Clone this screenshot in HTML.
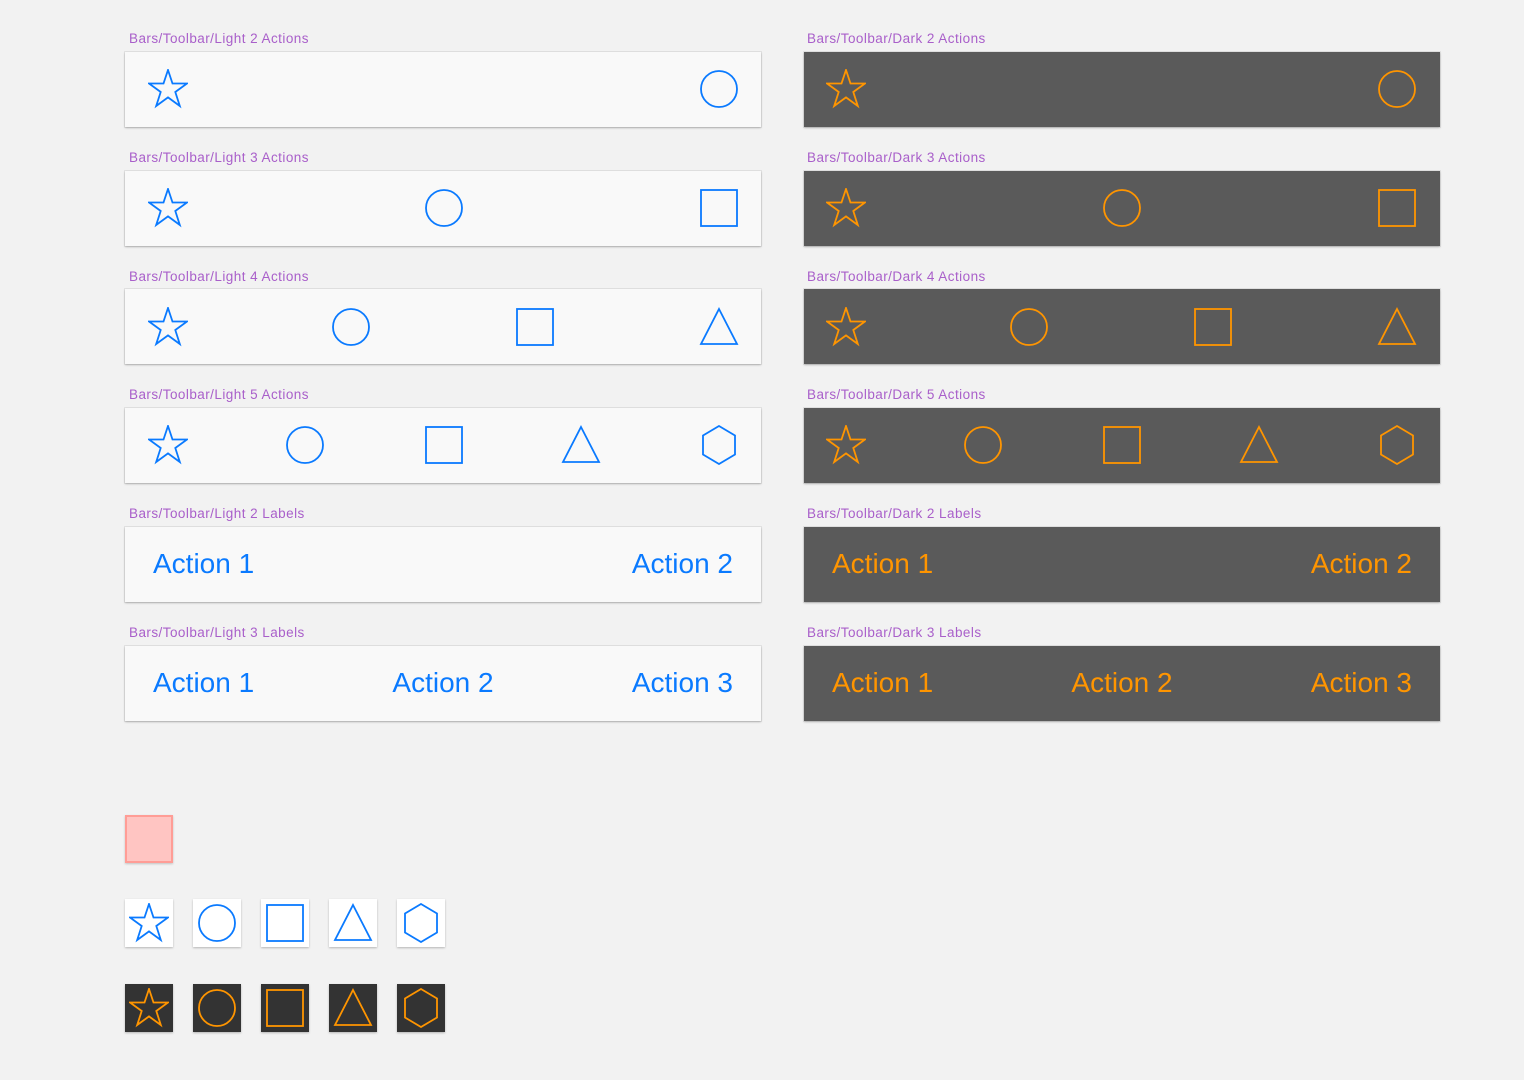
<!DOCTYPE html>
<html><head><meta charset="utf-8"><style>
body{margin:0;width:1524px;height:1080px;background:#f2f2f2;position:relative;overflow:hidden;font-family:"Liberation Sans",sans-serif}
.lb{position:absolute;font-size:13.5px;letter-spacing:0.45px;color:#a95fca;line-height:16px}
.bar{position:absolute;width:636px;height:75px;box-shadow:0 1px 2px rgba(0,0,0,.25),0 0 0 1px rgba(0,0,0,.06)}
.L{background:#f9f9f9}.D{background:#5a5a5a}
.i{position:absolute;width:40px;height:40px;overflow:visible}
.L .i,.tl .i{stroke:#0a7aff}.D .i,.td .i{stroke:#ff9500}
.i *{fill:none;stroke-width:1.8}
.t{position:absolute;top:19px;font-size:28px;line-height:36px}
.L .t{color:#0a7aff}.D .t{color:#ff9500}
.tile{position:absolute;width:48px;height:48px;box-shadow:0 1px 2px rgba(0,0,0,.25)}
.tl{background:#fff}.td{background:#333}
.tile .i{left:4px;top:4px}
</style></head><body>
<svg width="0" height="0" style="position:absolute"><defs>
<symbol id="s" viewBox="0 0 40 40"><polygon points="20,1 24.5,14.5 39,14.5 27.3,23 31.8,37 20,28.4 8.2,37 12.7,23 1,14.5 15.5,14.5"/></symbol>
<symbol id="c" viewBox="0 0 40 40"><circle cx="20" cy="20" r="18"/></symbol>
<symbol id="q" viewBox="0 0 40 40"><rect x="2" y="2" width="36" height="36"/></symbol>
<symbol id="t" viewBox="0 0 40 40"><polygon points="20,2 38,37 2,37"/></symbol>
<symbol id="h" viewBox="0 0 40 40"><polygon points="20,1 36,10.5 36,29.5 20,39 4,29.5 4,10.5"/></symbol>
</defs></svg>

<div class="lb" style="left:129px;top:31px">Bars/Toolbar/Light 2 Actions</div>
<div class="bar L" style="left:125px;top:52px">
<svg class="i" style="left:23px;top:17px"><use href="#s"/></svg>
<svg class="i" style="left:574px;top:17px"><use href="#c"/></svg></div>
<div class="lb" style="left:807px;top:31px">Bars/Toolbar/Dark 2 Actions</div>
<div class="bar D" style="left:804px;top:52px">
<svg class="i" style="left:22px;top:17px"><use href="#s"/></svg>
<svg class="i" style="left:573px;top:17px"><use href="#c"/></svg></div>

<div class="lb" style="left:129px;top:150px">Bars/Toolbar/Light 3 Actions</div>
<div class="bar L" style="left:125px;top:171px">
<svg class="i" style="left:23px;top:17px"><use href="#s"/></svg>
<svg class="i" style="left:299px;top:17px"><use href="#c"/></svg>
<svg class="i" style="left:574px;top:17px"><use href="#q"/></svg></div>
<div class="lb" style="left:807px;top:150px">Bars/Toolbar/Dark 3 Actions</div>
<div class="bar D" style="left:804px;top:171px">
<svg class="i" style="left:22px;top:17px"><use href="#s"/></svg>
<svg class="i" style="left:298px;top:17px"><use href="#c"/></svg>
<svg class="i" style="left:573px;top:17px"><use href="#q"/></svg></div>

<div class="lb" style="left:129px;top:269px">Bars/Toolbar/Light 4 Actions</div>
<div class="bar L" style="left:125px;top:289px">
<svg class="i" style="left:23px;top:18px"><use href="#s"/></svg>
<svg class="i" style="left:206px;top:18px"><use href="#c"/></svg>
<svg class="i" style="left:390px;top:18px"><use href="#q"/></svg>
<svg class="i" style="left:574px;top:18px"><use href="#t"/></svg></div>
<div class="lb" style="left:807px;top:269px">Bars/Toolbar/Dark 4 Actions</div>
<div class="bar D" style="left:804px;top:289px">
<svg class="i" style="left:22px;top:18px"><use href="#s"/></svg>
<svg class="i" style="left:205px;top:18px"><use href="#c"/></svg>
<svg class="i" style="left:389px;top:18px"><use href="#q"/></svg>
<svg class="i" style="left:573px;top:18px"><use href="#t"/></svg></div>

<div class="lb" style="left:129px;top:387px">Bars/Toolbar/Light 5 Actions</div>
<div class="bar L" style="left:125px;top:408px">
<svg class="i" style="left:23px;top:17px"><use href="#s"/></svg>
<svg class="i" style="left:160px;top:17px"><use href="#c"/></svg>
<svg class="i" style="left:299px;top:17px"><use href="#q"/></svg>
<svg class="i" style="left:436px;top:17px"><use href="#t"/></svg>
<svg class="i" style="left:574px;top:17px"><use href="#h"/></svg></div>
<div class="lb" style="left:807px;top:387px">Bars/Toolbar/Dark 5 Actions</div>
<div class="bar D" style="left:804px;top:408px">
<svg class="i" style="left:22px;top:17px"><use href="#s"/></svg>
<svg class="i" style="left:159px;top:17px"><use href="#c"/></svg>
<svg class="i" style="left:298px;top:17px"><use href="#q"/></svg>
<svg class="i" style="left:435px;top:17px"><use href="#t"/></svg>
<svg class="i" style="left:573px;top:17px"><use href="#h"/></svg></div>

<div class="lb" style="left:129px;top:506px">Bars/Toolbar/Light 2 Labels</div>
<div class="bar L" style="left:125px;top:527px">
<div class="t" style="left:28px">Action 1</div><div class="t" style="right:28px">Action 2</div></div>
<div class="lb" style="left:807px;top:506px">Bars/Toolbar/Dark 2 Labels</div>
<div class="bar D" style="left:804px;top:527px">
<div class="t" style="left:28px">Action 1</div><div class="t" style="right:28px">Action 2</div></div>

<div class="lb" style="left:129px;top:625px">Bars/Toolbar/Light 3 Labels</div>
<div class="bar L" style="left:125px;top:646px">
<div class="t" style="left:28px">Action 1</div><div class="t" style="left:0;width:636px;text-align:center">Action 2</div><div class="t" style="right:28px">Action 3</div></div>
<div class="lb" style="left:807px;top:625px">Bars/Toolbar/Dark 3 Labels</div>
<div class="bar D" style="left:804px;top:646px">
<div class="t" style="left:28px">Action 1</div><div class="t" style="left:0;width:636px;text-align:center">Action 2</div><div class="t" style="right:28px">Action 3</div></div>

<div style="position:absolute;left:125px;top:815px;width:44px;height:44px;background:#ffc5c2;border:2px solid #ff9d96;box-shadow:0 1px 2px rgba(0,0,0,.2)"></div>

<div class="tile tl" style="left:125px;top:899px"><svg class="i"><use href="#s"/></svg></div>
<div class="tile tl" style="left:193px;top:899px"><svg class="i"><use href="#c"/></svg></div>
<div class="tile tl" style="left:261px;top:899px"><svg class="i"><use href="#q"/></svg></div>
<div class="tile tl" style="left:329px;top:899px"><svg class="i"><use href="#t"/></svg></div>
<div class="tile tl" style="left:397px;top:899px"><svg class="i"><use href="#h"/></svg></div>

<div class="tile td" style="left:125px;top:984px"><svg class="i"><use href="#s"/></svg></div>
<div class="tile td" style="left:193px;top:984px"><svg class="i"><use href="#c"/></svg></div>
<div class="tile td" style="left:261px;top:984px"><svg class="i"><use href="#q"/></svg></div>
<div class="tile td" style="left:329px;top:984px"><svg class="i"><use href="#t"/></svg></div>
<div class="tile td" style="left:397px;top:984px"><svg class="i"><use href="#h"/></svg></div>
</body></html>
